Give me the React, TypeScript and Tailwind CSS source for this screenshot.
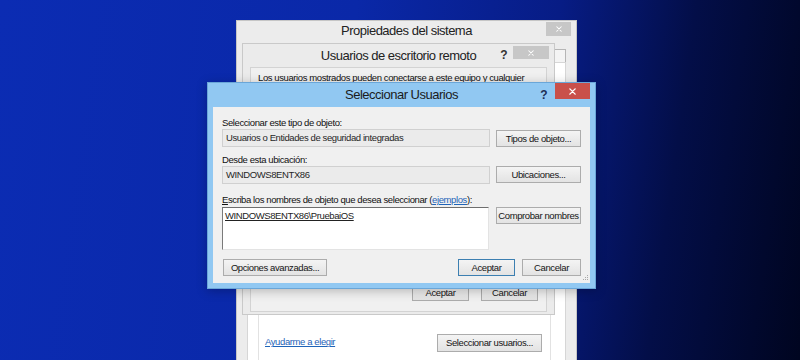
import React from 'react';

function CloseGlyph({ size = 7, color = '#ffffff', weight = 1.4 }: { size?: number; color?: string; weight?: number }) {
  return (
    <svg width={size} height={size} viewBox="0 0 8 8">
      <path d="M1 1L7 7M7 1L1 7" stroke={color} strokeWidth={weight} strokeLinecap="round" />
    </svg>
  );
}

function Btn({ children, className = '', primary = false }: { children: React.ReactNode; className?: string; primary?: boolean }) {
  return (
    <div
      className={`flex items-center justify-center whitespace-nowrap border bg-linear-to-b from-[#f4f4f4] to-[#e3e3e3] text-[9.5px] tracking-[-0.4px] leading-none text-[#151515] ${
        primary ? 'border-[#3c7fb1]' : 'border-[#acacac]'
      } ${className}`}
    >
      {children}
    </div>
  );
}

function Grip() {
  return (
    <svg width="6" height="6" viewBox="0 0 6 6">
      <rect x="4" y="0" width="1" height="1" fill="#a9a9a9" />
      <rect x="2" y="2" width="1" height="1" fill="#a9a9a9" />
      <rect x="4" y="2" width="1" height="1" fill="#a9a9a9" />
      <rect x="0" y="4" width="1" height="1" fill="#a9a9a9" />
      <rect x="2" y="4" width="1" height="1" fill="#a9a9a9" />
      <rect x="4" y="4" width="1" height="1" fill="#a9a9a9" />
    </svg>
  );
}

export default function App() {
  return (
    <div className="relative w-[800px] h-[360px] overflow-hidden bg-[linear-gradient(98deg,#0b2cb3_0%,#0a28a8_42%,#071c85_66%,#030e48_82%,#000520_100%)] font-['Liberation_Sans',Arial,sans-serif]">
      {/* Propiedades del sistema */}
      <div className="absolute left-[236px] top-[20px] w-[341px] h-[360px] bg-[#ececec] border border-[#c6c6c6] flex flex-col">
        <div className="relative h-[23px] flex items-center justify-center text-[13px] tracking-[-0.5px] text-[#222]">
          Propiedades del sistema
          <div className="absolute right-[5px] top-[1px] w-[25px] h-[14px] bg-[#c7c7c7] flex items-center justify-center">
            <CloseGlyph size={6} />
          </div>
        </div>
        <div className="flex flex-col px-[10px] pt-[8px]">
          <div className="flex justify-end h-[13px]">
            <div className="w-[70px] h-[13px] border border-b-0 border-[#b5b5b5] bg-[#f4f4f4]" />
          </div>
          <div className="bg-white border border-[#d6d6d6] h-[320px] pl-[10px] pr-[14px]">
            <div className="h-full border-x border-[#e2e2e2] flex flex-col">
              <div className="h-[271px]" />
              <div className="h-[18px] flex items-center justify-between pl-[6px] pr-[8px]">
                <span className="text-[9.5px] tracking-[-0.4px] text-[#1f64b8] underline">Ayudarme a elegir</span>
                <Btn className="w-[105px] h-[18px]">Seleccionar usuarios...</Btn>
              </div>
            </div>
          </div>
        </div>
      </div>

      {/* Usuarios de escritorio remoto */}
      <div className="absolute left-[242px] top-[43px] w-[313px] h-[272px] bg-[#ebebeb] border border-[#c9c9c9] flex flex-col">
        <div className="relative h-[23px] shrink-0 flex items-center justify-center text-[13px] tracking-[-0.5px] text-[#222]">
          Usuarios de escritorio remoto
          <span className="absolute right-[47px] top-[2px] text-[12px] font-bold text-[#333]">?</span>
          <div className="absolute right-[5px] top-[2px] w-[36px] h-[13px] bg-[#c7c7c7] flex items-center justify-center">
            <CloseGlyph size={6} />
          </div>
        </div>
        <div className="flex-1 mx-[7px] mb-[2px] bg-[#f0f0f0] border border-[#d3d3d3] flex flex-col px-[7px] pt-[3px] pb-[10px]">
          <div className="text-[9.5px] tracking-[-0.4px] leading-[13px] text-[#111] whitespace-nowrap">
            Los usuarios mostrados pueden conectarse a este equipo y cualquier
          </div>
          <div className="mt-auto flex justify-end gap-[12px] pr-[1px]">
            <Btn className="w-[57px] h-[17px]">Aceptar</Btn>
            <Btn className="w-[57px] h-[17px]">Cancelar</Btn>
          </div>
        </div>
      </div>

      {/* Seleccionar Usuarios */}
      <div className="absolute left-[207px] top-[82px] w-[389px] h-[207px] bg-[#91c8f2] border border-[#6aa6d8] flex flex-col px-[5px] pb-[5px] shadow-[0_2px_10px_rgba(0,0,0,0.25)]">
        <div className="relative h-[24px] shrink-0 flex items-center justify-center text-[13px] tracking-[-0.5px] text-[#1b1b1b]">
          Seleccionar Usuarios
          <span className="absolute right-[43px] top-[3px] text-[12px] font-bold text-[#1d2f56]">?</span>
          <div className="absolute right-0 top-0 w-[35px] h-[16px] bg-[#c9504a] flex items-center justify-center">
            <CloseGlyph size={7} weight={1.6} />
          </div>
        </div>
        <div className="relative flex-1 bg-[#f0f0f0] flex flex-col pl-[9px] pr-[9px] pt-[9px] text-[9.5px] tracking-[-0.4px] text-[#111]">
          <div className="h-[13px] leading-[13px]">Seleccionar este tipo de objeto:</div>
          <div className="flex gap-[6px] h-[18px]">
            <div className="w-[268px] h-[18px] border border-[#d0d0d0] bg-[#ebebeb] flex items-center pl-[3px] text-[#262626]">
              Usuarios o Entidades de seguridad integradas
            </div>
            <Btn className="w-[85px] h-[17px] mt-[1px]">Tipos de objeto...</Btn>
          </div>
          <div className="mt-[6px] h-[13px] leading-[13px]">Desde esta ubicación:</div>
          <div className="flex gap-[6px] h-[18px]">
            <div className="w-[268px] h-[18px] border border-[#d0d0d0] bg-[#ebebeb] flex items-center pl-[3px] text-[#262626]">
              WINDOWS8ENTX86
            </div>
            <Btn className="w-[85px] h-[17px]">Ubicaciones...</Btn>
          </div>
          <div className="mt-[9px] h-[13px] leading-[13px] whitespace-nowrap">
            <span className="underline">E</span>scriba los nombres de objeto que desea seleccionar (
            <span className="text-[#1f64b8] underline">ejemplos</span>):
          </div>
          <div className="mt-[1px] flex gap-[7px]">
            <div className="w-[267px] h-[43px] bg-white border border-[#e3e3e3] border-t-[#6e6e6e] border-l-[#7a7a7a] pl-[2px] pt-[1px] leading-[13px] text-[#222]">
              <span className="underline">WINDOWS8ENTX86\PruebaiOS</span>
            </div>
            <Btn className="w-[85px] h-[17px]">Comprobar nombres</Btn>
          </div>
          <div className="mt-[9px] flex items-center h-[17px]">
            <Btn className="ml-[1px] w-[104px] h-[17px]">Opciones avanzadas...</Btn>
            <div className="ml-auto flex gap-[7px]">
              <Btn primary className="w-[57px] h-[17px]">Aceptar</Btn>
              <Btn className="w-[59px] h-[17px]">Cancelar</Btn>
            </div>
          </div>
          <div className="absolute right-[1px] bottom-[2px]">
            <Grip />
          </div>
        </div>
      </div>
    </div>
  );
}
